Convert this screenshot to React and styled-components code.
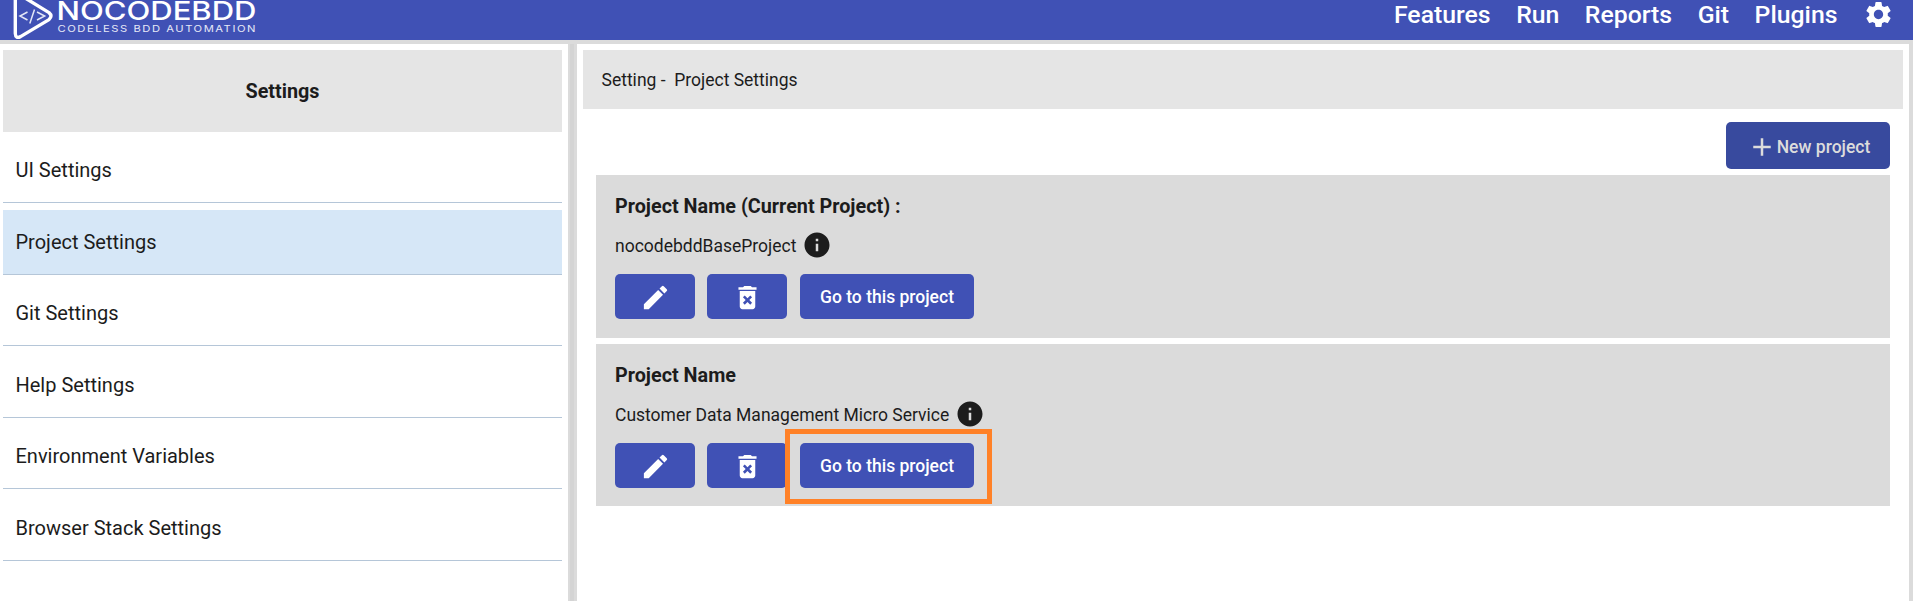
import styled, {createGlobalStyle} from 'styled-components';
import {MdAdd, MdEdit, MdInfo, MdSettings} from 'react-icons/md';

const NAV = ['Features', 'Run', 'Reports', 'Git', 'Plugins'];

const MENU = [
  'UI Settings',
  'Project Settings',
  'Git Settings',
  'Help Settings',
  'Environment Variables',
  'Browser Stack Settings',
];

const PROJECTS = [
  {title: 'Project Name (Current Project) :', name: 'nocodebddBaseProject'},
  {
    title: 'Project Name',
    name: 'Customer Data Management Micro Service',
    marked: true,
  },
];

function Logo() {
  return (
    <LogoSvg viewBox="0 0 262 40">
      <path
        d="M15.3 -12 V33.5 Q15.5 39 20.5 36.6 L49 19.6 Q53 16 49 12.6 L15.3 -8"
        fill="none"
        stroke="#fff"
        strokeWidth="3.4"
        strokeLinejoin="round"
      />
      <path
        d="M27.5 12 L20 16 L27.5 20 M34.5 9.5 L29.8 23.5 M37 12 L44.7 16 L37 20"
        fill="none"
        stroke="#e3e6f6"
        strokeWidth="1.5"
      />
      <Brand x="56.5" y="19.8" textLength="200" lengthAdjust="spacingAndGlyphs">
        NOCODEBDD
      </Brand>
      <Tagline x="57.5" y="31.9" textLength="199.5" lengthAdjust="spacingAndGlyphs">
        CODELESS BDD AUTOMATION
      </Tagline>
    </LogoSvg>
  );
}

function TrashIcon() {
  return (
    <svg width="31" height="31" viewBox="0 0 24 24" fill="#fff">
      <path
        fillRule="evenodd"
        d="M6 19c0 1.1.9 2 2 2h8c1.1 0 2-.9 2-2V7H6v12zm2.46-7.12 1.41-1.41L12 12.59l2.12-2.12 1.41 1.41L13.41 14l2.12 2.12-1.41 1.41L12 15.41l-2.12 2.12-1.41-1.41L10.59 14l-2.13-2.12zM15.5 4l-1-1h-5l-1 1H5v2h14V4z"
      />
    </svg>
  );
}

function Project({title, name, marked}) {
  return (
    <Card>
      <CardTitle>{title}</CardTitle>
      <CardRow>
        <CardName>{name}</CardName>
        <MdInfo size={30} />
      </CardRow>
      <Actions>
        <IconButton>
          <MdEdit size={31} />
        </IconButton>
        <IconButton>
          <TrashIcon />
        </IconButton>
        <GoButton>
          Go to this project
          {marked && <Marker />}
        </GoButton>
      </Actions>
    </Card>
  );
}

function App() {
  return (
    <Page>
      <GlobalStyle />
      <Header>
        <Logo />
        <Nav>
          {NAV.map(label => (
            <NavLink key={label}>{label}</NavLink>
          ))}
          <MdSettings size={31} />
        </Nav>
      </Header>
      <Body>
        <Sidebar>
          <SidebarTitle>Settings</SidebarTitle>
          {MENU.map(label => (
            <MenuItem key={label} $active={label === 'Project Settings'}>
              {label}
            </MenuItem>
          ))}
        </Sidebar>
        <Splitter />
        <Main>
          <Breadcrumb>{'Setting -  Project Settings'}</Breadcrumb>
          <Content>
            <NewButton>
              <MdAdd size={30} />
              New project
            </NewButton>
            {PROJECTS.map(project => (
              <Project key={project.name} {...project} />
            ))}
          </Content>
        </Main>
      </Body>
    </Page>
  );
}
export default App;

const GlobalStyle = createGlobalStyle`
  * {
    box-sizing: border-box;
  }
  body {
    margin: 0;
    background-color: #fff;
    color: #1c1c1c;
    font-family: Roboto, sans-serif;
  }
`;

const Page = styled.div`
  width: 1913px;
  height: 601px;
  display: flex;
  flex-direction: column;
  overflow: hidden;
`;

const Header = styled.header`
  flex: none;
  height: 40px;
  display: flex;
  justify-content: space-between;
  background-color: #4051b5;
  color: #fff;
`;

const LogoSvg = styled.svg`
  width: 262px;
  height: 40px;
`;

const Brand = styled.text`
  font-family: Inter, sans-serif;
  font-size: 25.5px;
  font-weight: 500;
  fill: #fff;
`;

const Tagline = styled.text`
  font-family: Inter, sans-serif;
  font-size: 9.6px;
  font-weight: 400;
  letter-spacing: 1.3px;
  fill: #e6e8f7;
`;

const Nav = styled.nav`
  display: flex;
  align-items: center;
  gap: 25.5px;
  height: 29px;
  padding-right: 19px;
`;

const NavLink = styled.a`
  font-size: 24.8px;
  font-weight: 500;
  line-height: 28px;
  white-space: nowrap;
`;

const Body = styled.div`
  flex: 1;
  display: flex;
  border-top: 4px solid #dbdbdb;
  border-right: 4px solid #dbdbdb;
`;

const Sidebar = styled.aside`
  width: 568px;
  padding: 6px 6px 0 3px;
`;

const SidebarTitle = styled.div`
  height: 81.7px;
  padding-top: 1px;
  display: flex;
  align-items: center;
  justify-content: center;
  background-color: #e5e5e5;
  font-size: 19.8px;
  font-weight: 700;
`;

const MenuItem = styled.div`
  height: 64.9px;
  margin-top: 6.6px;
  padding-left: 12.5px;
  display: flex;
  align-items: center;
  border-bottom: 1px solid #b5c6d8;
  background-color: ${({$active}) => ($active ? '#d6e7f7' : 'transparent')};
  font-size: 20px;
`;

const Splitter = styled.div`
  width: 9px;
  border: solid #dbdbdb;
  border-width: 0 3px 0 2px;
  background-color: #d4d4d4;
`;

const Main = styled.main`
  flex: 1;
  padding: 6px 6px 0;
`;

const Breadcrumb = styled.div`
  height: 59px;
  padding-left: 18.5px;
  display: flex;
  align-items: center;
  background-color: #e5e5e5;
  font-size: 17.5px;
  white-space: pre;
`;

const Content = styled.div`
  padding: 13px 13px 0;
  display: flex;
  flex-direction: column;
  gap: 6px;
`;

const Button = styled.button`
  display: flex;
  align-items: center;
  justify-content: center;
  height: 45px;
  padding: 0;
  border: 0;
  border-radius: 5px;
  background-color: #4051b5;
  color: #fff;
  font-family: inherit;
  font-size: 17.5px;
  font-weight: 500;
  white-space: nowrap;
`;

const NewButton = styled(Button)`
  align-self: flex-end;
  width: 164px;
  height: 47px;
  padding: 2px 0 0 1px;
  gap: 0;
  background-color: #384a9e;
  color: #dcdcdc;
`;

const IconButton = styled(Button)`
  width: 80px;
  margin-right: 12px;
  padding: 2px 0 0 0;
`;

const GoButton = styled(Button)`
  position: relative;
  width: 174px;
  margin-left: 1px;
  padding-top: 1px;
`;

const Marker = styled.span`
  position: absolute;
  top: -14px;
  left: -15px;
  width: 207px;
  height: 75px;
  border: 5px solid #ff8127;
`;

const Card = styled.section`
  height: 162.5px;
  padding: 19px 19px 0;
  background-color: #dbdbdb;
`;

const CardTitle = styled.div`
  font-size: 19.8px;
  font-weight: 700;
  line-height: 25px;
`;

const CardRow = styled.div`
  display: flex;
  align-items: center;
  gap: 6px;
  height: 30px;
  margin-top: 11px;
`;

const CardName = styled.span`
  padding-top: 2px;
  font-size: 17.5px;
`;

const Actions = styled.div`
  display: flex;
  margin-top: 14px;
`;
